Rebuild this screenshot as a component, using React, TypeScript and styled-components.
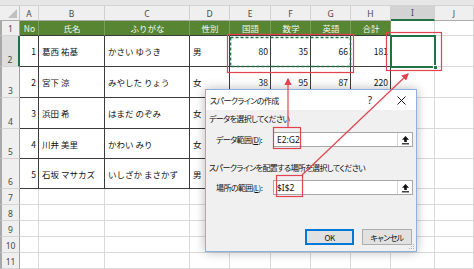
import { Fragment } from 'react';
import styled, { createGlobalStyle, css } from 'styled-components';

const GlobalStyle = createGlobalStyle`
  * { box-sizing: border-box; }
  body {
    margin: 0;
    background: #fff;
    overflow: hidden;
    font-family: "Noto Sans CJK JP", "Noto Sans", sans-serif;
  }
`;

type Align = 'left' | 'right' | 'center';
type Tone = 'plain' | 'table' | 'head';

const COLS = ['A', 'B', 'C', 'D', 'E', 'F', 'G', 'H', 'I', 'J'];
const ALIGNS: Align[] = ['right', 'left', 'left', 'left', 'right', 'right', 'right', 'right', 'left', 'left'];

const TABLE = [
  ['No', '氏名', 'ふりがな', '性別', '国語', '数学', '英語', '合計'],
  ['1', '葛西 祐基', 'かさい ゆうき', '男', '80', '35', '66', '181'],
  ['2', '宮下 涼', 'みやした りょう', '女', '38', '95', '87', '220'],
  ['3', '浜田 希', 'はまだ のぞみ', '女', '72', '64', '58', '194'],
  ['4', '川井 美里', 'かわい みり', '女', '55', '81', '90', '226'],
  ['5', '石坂 マサカズ', 'いしざか まさかず', '男', '91', '47', '73', '211'],
];

const TOTAL_ROWS = 11;
const SELECTED_ROW = 2;
const SELECTED_COL = 'I';
const RED = '#e3434f';

const Page = styled.div`
  position: relative;
  width: 474px;
  height: 269px;
  overflow: hidden;
`;

const TopStrip = styled.div`
  height: 6px;
  background: #e6e6e6;
  border-bottom: 1px solid #d4d4d4;
`;

const Sheet = styled.div`
  display: grid;
  grid-template-columns: 20px 19px 66px 85px 40px 41px 40px 40px 40px 44px 39px;
  grid-template-rows: 15px 15px 31px 31px 31px 30px 30px repeat(5, 16px);
`;

const Corner = styled.div`
  position: relative;
  background: #efefef;
  border-right: 1px solid #c4c4c4;
  border-bottom: 1px solid #ababab;

  &::after {
    content: '';
    position: absolute;
    right: 2px;
    bottom: 2px;
    border-left: 9px solid transparent;
    border-bottom: 9px solid #c0c0c0;
  }
`;

const ColHeader = styled.div<{ $active?: boolean }>`
  display: flex;
  align-items: center;
  justify-content: center;
  font-family: "Noto Sans", "DejaVu Sans", sans-serif;
  font-size: 8.5px;
  color: #4a4a4a;
  background: ${(p) => (p.$active ? '#d3d3d3' : '#efefef')};
  border-right: 1px solid #d0d0d0;
  border-bottom: ${(p) => (p.$active ? '2px solid #217346' : '1px solid #ababab')};
`;

const RowHeader = styled.div<{ $active?: boolean }>`
  display: flex;
  align-items: flex-end;
  justify-content: center;
  padding-bottom: 1px;
  font-family: "Noto Sans", "DejaVu Sans", sans-serif;
  font-size: 8.5px;
  color: #4a4a4a;
  background: ${(p) => (p.$active ? '#dedede' : '#efefef')};
  border-left: 2px solid #a9a9a9;
  border-bottom: 1px solid #d4d4d4;
  border-right: ${(p) => (p.$active ? '2px solid #217346' : '1px solid #a2a2a2')};
`;

const Cell = styled.div<{ $tone: Tone; $align: Align }>`
  display: flex;
  align-items: center;
  justify-content: ${(p) =>
    p.$align === 'right' ? 'flex-end' : p.$align === 'center' ? 'center' : 'flex-start'};
  padding: 0 2px 0 3px;
  font-size: 8.5px;
  white-space: nowrap;
  overflow: hidden;
  color: #111;
  border-right: 1px solid #dadada;
  border-bottom: 1px solid #dadada;

  ${(p) =>
    p.$tone === 'table' &&
    css`
      border-right-color: #3c3c3c;
      border-bottom-color: #3c3c3c;
    `}

  ${(p) =>
    p.$tone === 'head' &&
    css`
      background: #578532;
      color: #f4f8ef;
      border-right-color: #7a9d5e;
      border-bottom-color: #3c3c3c;
    `}
`;

const SelectedCell = styled.div`
  position: absolute;
  left: 390px;
  top: 35px;
  width: 46px;
  height: 33px;
  border: 2px solid #217346;
`;

const FillHandle = styled.div`
  position: absolute;
  right: -4px;
  bottom: -4px;
  width: 5px;
  height: 5px;
  background: #217346;
  border: 1px solid #fff;
`;

const Dialog = styled.div`
  position: absolute;
  left: 205px;
  top: 89px;
  width: 212px;
  height: 163px;
  display: flex;
  flex-direction: column;
  background: #f0f0f0;
  border: 1px solid #8db1da;
  box-shadow: 0 0 10px rgba(0, 0, 0, 0.28);
  font-family: "Noto Sans CJK JP", sans-serif;
  font-size: 8px;
  letter-spacing: -0.6px;
  font-feature-settings: "palt";
  color: #111;
`;

const TitleBar = styled.div`
  display: flex;
  align-items: center;
  height: 20px;
  padding-left: 4px;
  background: #fff;
`;

const Title = styled.div`
  flex: 1;
`;

const HelpButton = styled.div`
  width: 24px;
  margin-right: 4px;
  text-align: center;
  font-family: "Noto Sans", sans-serif;
  font-size: 10px;
  letter-spacing: 0;
  color: #222;
`;

const CloseButton = styled.div`
  display: flex;
  align-items: center;
  justify-content: center;
  width: 30px;
  height: 20px;
`;

const SectionLabel = styled.div<{ $gap: number }>`
  margin-top: ${(p) => p.$gap}px;
  height: 12px;
  line-height: 12px;
  padding-left: 3px;
`;

const FieldRow = styled.div<{ $gap: number }>`
  display: grid;
  grid-template-columns: 57px 1fr;
  align-items: center;
  height: 15px;
  margin-top: ${(p) => p.$gap}px;
  padding: 0 3px 0 10px;
`;

const FieldLabel = styled.div`
  white-space: nowrap;

  u {
    text-underline-offset: 1px;
  }
`;

const InputBox = styled.div`
  display: flex;
  height: 15px;
  background: #fff;
  border: 1px solid #a7a7a7;
`;

const InputText = styled.div`
  flex: 1;
  padding-left: 3px;
  line-height: 13px;
  font-family: "Noto Sans", "DejaVu Sans", sans-serif;
  font-size: 8.5px;
  letter-spacing: 0;
`;

const RefButton = styled.div`
  display: flex;
  align-items: center;
  justify-content: center;
  width: 15px;
  border-left: 1px solid #d6d6d6;
`;

const ButtonRow = styled.div`
  display: flex;
  justify-content: flex-end;
  gap: 8px;
  margin-top: auto;
  padding: 0 4px 6px 0;
`;

const DialogButton = styled.div<{ $primary?: boolean }>`
  display: flex;
  align-items: center;
  justify-content: center;
  width: ${(p) => (p.$primary ? 49 : 50)}px;
  height: 16px;
  background: #e1e1e1;
  border: 1px solid ${(p) => (p.$primary ? '#0078d7' : '#adadad')};
  box-shadow: ${(p) => (p.$primary ? 'inset 0 0 0 1px #0078d7' : 'none')};
`;

const SizeGrip = styled.svg`
  position: absolute;
  right: 1px;
  bottom: 1px;
`;

const Overlay = styled.svg`
  position: absolute;
  left: 0;
  top: 0;
  pointer-events: none;
`;

const RefIcon = () => (
  <svg width="9" height="10" viewBox="0 0 9 10">
    <path d="M4.5 1 L8 4.8 H5.8 V7 H3.2 V4.8 H1 Z" fill="#111" />
    <rect x="1" y="8.2" width="7" height="1.2" fill="#111" />
  </svg>
);

const cellTone = (row: number, col: number): Tone => {
  if (col > 7 || row > TABLE.length) return 'plain';
  return row === 1 ? 'head' : 'table';
};

const cellText = (row: number, col: number) => TABLE[row - 1]?.[col] ?? '';

export default function App() {
  const rows = Array.from({ length: TOTAL_ROWS }, (_, i) => i + 1);

  return (
    <Page>
      <GlobalStyle />
      <TopStrip />
      <Sheet>
        <Corner />
        {COLS.map((c) => (
          <ColHeader key={c} $active={c === SELECTED_COL}>
            {c}
          </ColHeader>
        ))}
        {rows.map((r) => (
          <Fragment key={r}>
            <RowHeader $active={r === SELECTED_ROW}>{r}</RowHeader>
            {COLS.map((c, ci) => {
              const tone = cellTone(r, ci);
              return (
                <Cell key={c} $tone={tone} $align={tone === 'head' ? 'center' : ALIGNS[ci]}>
                  {cellText(r, ci)}
                </Cell>
              );
            })}
          </Fragment>
        ))}
      </Sheet>

      <SelectedCell>
        <FillHandle />
      </SelectedCell>

      <Dialog>
        <TitleBar>
          <Title>スパークラインの作成</Title>
          <HelpButton>?</HelpButton>
          <CloseButton>
            <svg width="9" height="9" viewBox="0 0 9 9">
              <path d="M0.5 0.5 L8.5 8.5 M8.5 0.5 L0.5 8.5" stroke="#222" strokeWidth="1" />
            </svg>
          </CloseButton>
        </TitleBar>

        <SectionLabel $gap={3}>データを選択してください</SectionLabel>
        <FieldRow $gap={7}>
          <FieldLabel>
            データ範囲(<u>D</u>):
          </FieldLabel>
          <InputBox>
            <InputText>E2:G2</InputText>
            <RefButton>
              <RefIcon />
            </RefButton>
          </InputBox>
        </FieldRow>

        <SectionLabel $gap={15}>スパークラインを配置する場所を選択してください</SectionLabel>
        <FieldRow $gap={6}>
          <FieldLabel>
            場所の範囲(<u>L</u>):
          </FieldLabel>
          <InputBox>
            <InputText>$I$2</InputText>
            <RefButton>
              <RefIcon />
            </RefButton>
          </InputBox>
        </FieldRow>

        <ButtonRow>
          <DialogButton $primary>OK</DialogButton>
          <DialogButton>キャンセル</DialogButton>
        </ButtonRow>

        <SizeGrip width="6" height="6" viewBox="0 0 6 6">
          <rect x="4" y="0" width="1" height="1" fill="#b5b5b5" />
          <rect x="2" y="2" width="1" height="1" fill="#b5b5b5" />
          <rect x="4" y="2" width="1" height="1" fill="#b5b5b5" />
          <rect x="0" y="4" width="1" height="1" fill="#b5b5b5" />
          <rect x="2" y="4" width="1" height="1" fill="#b5b5b5" />
          <rect x="4" y="4" width="1" height="1" fill="#b5b5b5" />
        </SizeGrip>
      </Dialog>

      <Overlay width="474" height="269" viewBox="0 0 474 269">
        <defs>
          <marker id="head" markerWidth="6" markerHeight="6" refX="5" refY="3" orient="auto">
            <path d="M0 0 L6 3 L0 6 Z" fill={RED} />
          </marker>
        </defs>
        <rect
          x="230.5"
          y="37.5"
          width="120"
          height="29"
          fill="none"
          stroke="#217346"
          strokeWidth="1.6"
          strokeDasharray="3 2"
        />
        <rect x="227.5" y="34.5" width="126" height="38" fill="none" stroke={RED} strokeWidth="1.2" />
        <rect x="386.5" y="32.5" width="55" height="38" fill="none" stroke={RED} strokeWidth="1.2" />
        <rect x="273.5" y="127.5" width="27" height="21" fill="none" stroke={RED} strokeWidth="1.2" />
        <rect x="276.5" y="175.5" width="26" height="21" fill="none" stroke={RED} strokeWidth="1.2" />
        <line x1="288" y1="127" x2="288" y2="79" stroke={RED} strokeWidth="1.2" markerEnd="url(#head)" />
        <line x1="302" y1="175" x2="408" y2="74" stroke={RED} strokeWidth="1.2" markerEnd="url(#head)" />
      </Overlay>
    </Page>
  );
}
